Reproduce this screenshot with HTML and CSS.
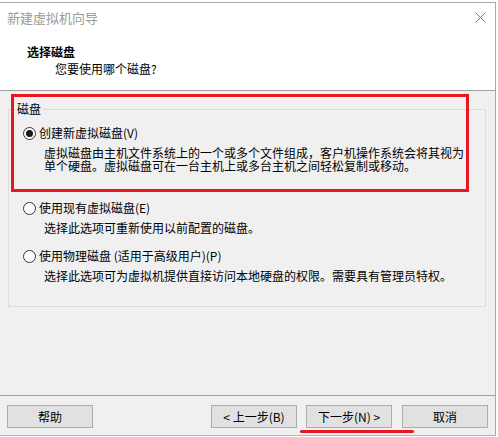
FILE: index.html
```html
<!doctype html>
<html>

<head>
    <meta charset="UTF-8">
    <meta name="viewport" content="width=device-width, initial-scale=1.0">
    <link rel="stylesheet" href="styles.css">
    <title>新建虚拟机向导</title>
</head>

<body>
    <div class="window">
        <div class="titlebar">
            <span class="title">新建虚拟机向导</span>
            <svg class="close" width="11" height="11" viewBox="0 0 11 11">
                <path d="M0.5 0.5 L10.5 10.5 M10.5 0.5 L0.5 10.5" stroke="#7a7a7a" stroke-width="1" fill="none" />
            </svg>
        </div>
        <div class="header">
            <p class="heading">选择磁盘</p>
            <p class="subheading">您要使用哪个磁盘?</p>
        </div>
        <div class="content">
            <fieldset class="group">
                <legend>磁盘</legend>
                <div class="option first">
                    <span class="radio checked"></span>
                    <span>创建新虚拟磁盘(V)</span>
                </div>
                <p class="desc">虚拟磁盘由主机文件系统上的一个或多个文件组成，客户机操作系统会将其视为</p>
                <p class="desc more">单个硬盘。虚拟磁盘可在一台主机上或多台主机之间轻松复制或移动。</p>
                <div class="option second">
                    <span class="radio"></span>
                    <span>使用现有虚拟磁盘(E)</span>
                </div>
                <p class="desc">选择此选项可重新使用以前配置的磁盘。</p>
                <div class="option third">
                    <span class="radio"></span>
                    <span>使用物理磁盘 (适用于高级用户)(P)</span>
                </div>
                <p class="desc">选择此选项可为虚拟机提供直接访问本地硬盘的权限。需要具有管理员特权。</p>
            </fieldset>
        </div>
        <div class="footer">
            <button class="btn">帮助</button>
            <div class="nav">
                <button class="btn">&lt; 上一步(B)</button>
                <button class="btn">下一步(N) &gt;</button>
                <button class="btn cancel">取消</button>
            </div>
        </div>
    </div>

    <div class="mark-box"></div>
    <div class="mark-line"></div>
</body>

</html>
```

FILE: styles.css
```css
html,
body {
    margin: 0;
    background-color: #ffffff;
    font-family: "Noto Sans CJK SC", "Microsoft YaHei", sans-serif;
    font-size: 12px;
    color: #000000;
}

p {
    margin: 0;
}

.window {
    margin-top: 2px;
    width: 496px;
    height: 434px;
    box-sizing: border-box;
    border-top: 1px solid #a8a8a8;
    border-right: 1px solid #a8a8a8;
    border-bottom: 1px solid #b4b4b4;
    display: flex;
    flex-direction: column;
    background-color: #f0f0f0;
}

.titlebar {
    height: 28px;
    background-color: #ffffff;
    display: flex;
    align-items: center;
    justify-content: space-between;
    padding: 0 9px 0 7px;
}

.title {
    color: #9a9a9a;
    font-size: 13px;
}

.close {
    display: block;
}

.header {
    height: 60px;
    box-sizing: border-box;
    background-color: #ffffff;
    border-bottom: 1px solid #a0a0a0;
    padding: 12px 0 0 27px;
}

.heading {
    font-weight: bold;
    line-height: 17px;
}

.subheading {
    line-height: 17px;
    padding-left: 28px;
}

.content {
    height: 304px;
    padding-top: 10px;
    box-sizing: border-box;
}

.group {
    margin: 0 0 0 8px;
    width: 478px;
    box-sizing: border-box;
    border: 1px solid #dcdcdc;
    padding: 8px 14px 24px 14px;
    min-width: 0;
}

.group legend {
    padding: 0 2px;
    margin-left: -8px;
    line-height: 16px;
}

.option {
    display: flex;
    align-items: center;
    line-height: 16px;
    gap: 3px;
}

.option.second {
    margin-top: 28px;
}

.option.third {
    margin-top: 14px;
}

.radio {
    width: 13px;
    height: 13px;
    box-sizing: border-box;
    border: 1px solid #333333;
    border-radius: 50%;
    background-color: #ffffff;
    display: flex;
    align-items: center;
    justify-content: center;
}

.radio.checked::after {
    content: "";
    width: 7px;
    height: 7px;
    border-radius: 50%;
    background-color: #1a1a1a;
}

.desc {
    padding-left: 21px;
    margin-top: 5px;
    line-height: 13px;
}

.desc.more {
    margin-top: 0;
}

.footer {
    flex: 1;
    border-top: 1px solid #a0a0a0;
    display: flex;
    justify-content: space-between;
    padding: 9px 7px 0 7px;
}

.nav {
    display: flex;
    gap: 9px;
}

.nav .cancel {
    margin-left: 1px;
}

.btn {
    width: 86px;
    height: 23px;
    box-sizing: border-box;
    border: 1px solid #adadad;
    background-color: #e1e1e1;
    font-family: "Noto Sans CJK SC", "Microsoft YaHei", sans-serif;
    font-size: 12px;
    color: #000000;
    padding: 0;
}

.mark-box {
    position: absolute;
    left: 11px;
    top: 94px;
    width: 458px;
    height: 98px;
    box-sizing: border-box;
    border: 3px solid #e8161e;
}

.mark-line {
    position: absolute;
    left: 300px;
    top: 430px;
    width: 114px;
    height: 3px;
    border-radius: 2px;
    background-color: #e8161e;
}
```
